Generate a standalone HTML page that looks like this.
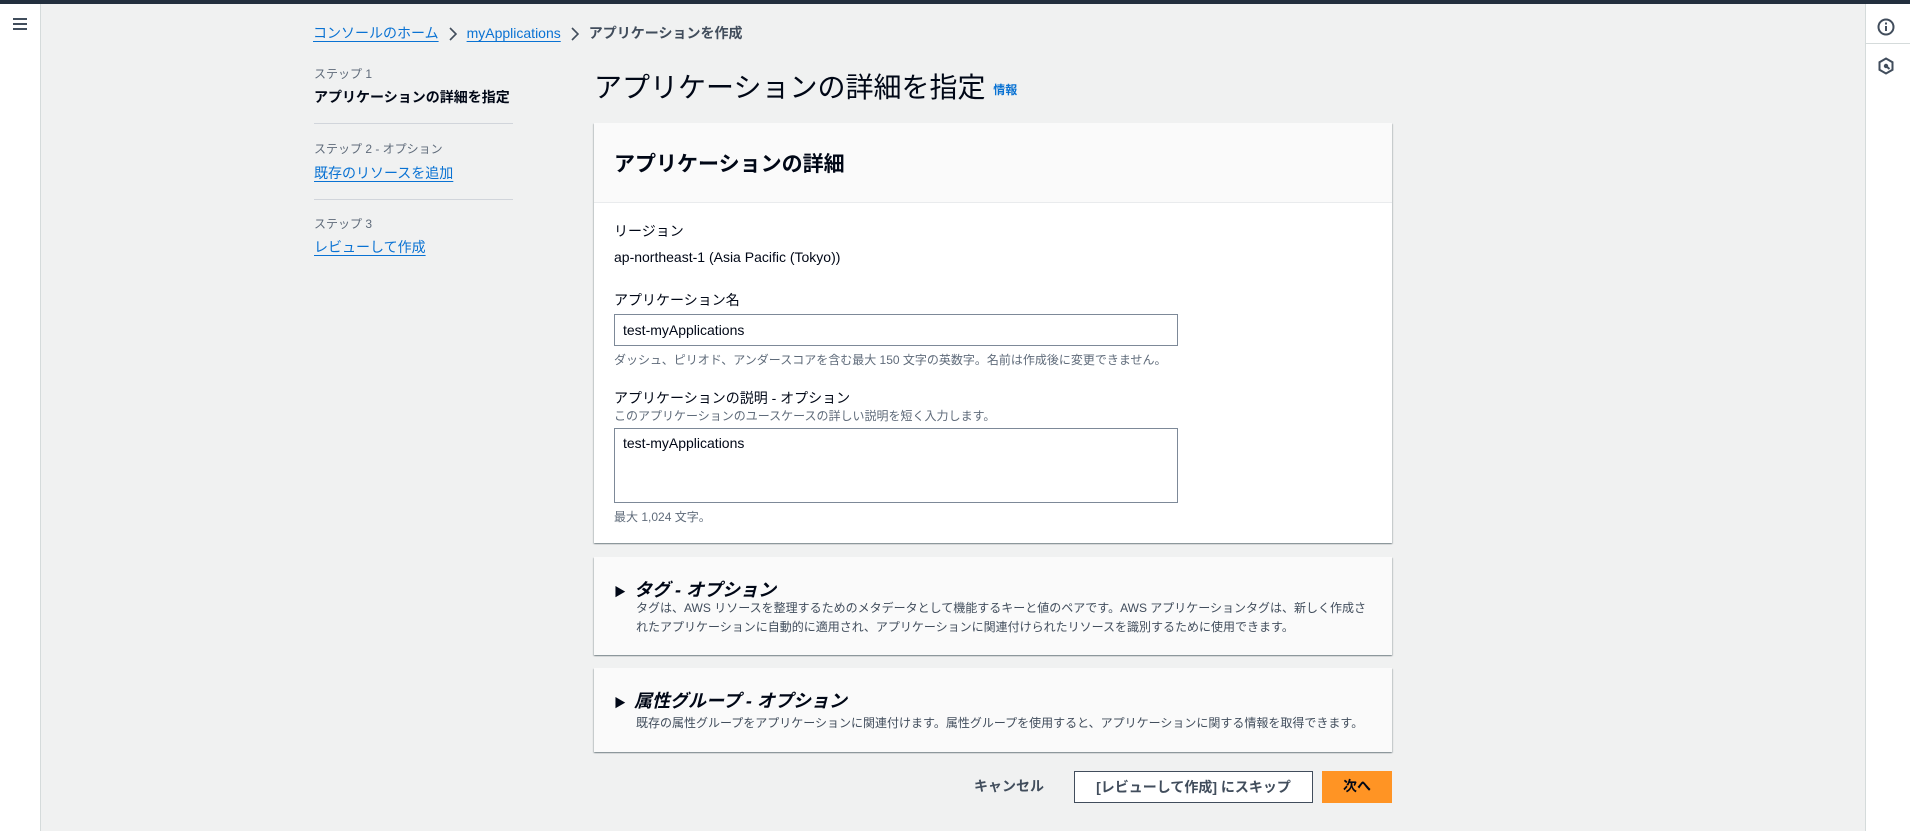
<!DOCTYPE html>
<html><head><meta charset="utf-8"><style>
*{box-sizing:border-box;margin:0;padding:0}
body{width:1910px;height:831px;overflow:hidden;background:#f0f1f1;font-family:"Liberation Sans","Noto Sans CJK JP",sans-serif;color:#000716;font-size:14px;position:relative}
.top{position:absolute;left:0;top:0;width:1910px;height:4px;background:#232f3e}
.lnav{position:absolute;left:0;top:4px;width:41px;height:827px;background:#fff;border-right:1px solid #d5dbdb}
.rnav{position:absolute;left:1865px;top:4px;width:45px;height:827px;background:#fff;border-left:1px solid #d5dbdb}
.abs{position:absolute;white-space:nowrap}
a{color:#0972d3;text-decoration:underline;text-underline-offset:3px}
.crumb{top:23px;left:313px;font-size:14px;color:#414d5c}
.crumb a{color:#0972d3}
.sep{display:inline-block;margin:0 10px;vertical-align:middle}
.sl{font-size:12px;color:#5f6b7a}
.hr{position:absolute;left:314px;width:199px;height:1px;background:#d1d5db}
.card{position:absolute;left:594px;width:798px;background:#fff;box-shadow:0 1px 1px 0 rgba(0,28,36,.3),1px 1px 1px 0 rgba(0,28,36,.15),-1px 1px 1px 0 rgba(0,28,36,.15)}
.inp{position:absolute;left:614px;width:564px;border:1px solid #7d8998;background:#fff;padding:0 8px;font-size:14px}
.small{font-size:12px;color:#5f6b7a}
.btn{position:absolute;top:771px;height:32px;font-weight:bold;font-size:14px;text-align:center;line-height:30px}
</style></head><body>
<div class="top"></div>
<div class="lnav"><div style="position:absolute;left:13px;top:14px;width:14px;height:2px;background:#414d5c;box-shadow:0 5px 0 #414d5c,0 10px 0 #414d5c"></div></div>
<div class="rnav">
<svg style="position:absolute;left:10px;top:13px" width="20" height="20" viewBox="0 0 20 20"><circle cx="10" cy="10" r="7.5" fill="none" stroke="#414d5c" stroke-width="2"/><rect x="9" y="9" width="2" height="5" fill="#414d5c"/><rect x="9" y="5.5" width="2" height="2" fill="#414d5c"/></svg>
<div style="position:absolute;left:0;top:39px;width:45px;height:1px;background:#d5dbdb"></div>
<svg style="position:absolute;left:10px;top:52px" width="20" height="20" viewBox="0 0 20 20"><path d="M10 2.5 16.5 6.2v7.6L10 17.5 3.5 13.8V6.2z" fill="none" stroke="#414d5c" stroke-width="2"/><circle cx="10" cy="10" r="2.2" fill="#414d5c"/><path d="M10 10l3.5 3" stroke="#414d5c" stroke-width="2"/></svg>
</div>
<div class="abs crumb"><a>コンソールのホーム</a><svg class="sep" width="8" height="14" viewBox="0 0 8 14"><path d="M1 1l6 6-6 6" fill="none" stroke="#414d5c" stroke-width="1.6"/></svg><a>myApplications</a><svg class="sep" width="8" height="14" viewBox="0 0 8 14"><path d="M1 1l6 6-6 6" fill="none" stroke="#414d5c" stroke-width="1.6"/></svg><span style="font-weight:bold">アプリケーションを作成</span></div>

<div class="abs sl" style="left:314px;top:65px">ステップ 1</div>
<div class="abs" style="left:314px;top:87px;font-weight:bold">アプリケーションの詳細を指定</div>
<div class="hr" style="top:123px"></div>
<div class="abs sl" style="left:314px;top:140px">ステップ 2 - オプション</div>
<div class="abs" style="left:314px;top:163px"><a>既存のリソースを追加</a></div>
<div class="hr" style="top:199px"></div>
<div class="abs sl" style="left:314px;top:215px">ステップ 3</div>
<div class="abs" style="left:314px;top:237px"><a>レビューして作成</a></div>

<div class="abs" style="left:594px;top:66px;font-size:28px;color:#000716">アプリケーションの詳細を指定 <span style="font-size:12px;font-weight:bold;color:#0972d3;vertical-align:middle">情報</span></div>

<div class="card" style="top:123px;height:420px">
<div style="height:80px;background:#fafafa;border-bottom:1px solid #e9ebed;padding:25px 20px;font-size:21px;font-weight:bold">アプリケーションの詳細</div>
</div>
<div class="abs" style="left:614px;top:221px">リージョン</div>
<div class="abs" style="left:614px;top:249px">ap-northeast-1 (Asia Pacific (Tokyo))</div>
<div class="abs" style="left:614px;top:290px">アプリケーション名</div>
<div class="inp" style="top:314px;height:32px;line-height:30px">test-myApplications</div>
<div class="abs small" style="left:614px;top:351px">ダッシュ、ピリオド、アンダースコアを含む最大 150 文字の英数字。名前は作成後に変更できません。</div>
<div class="abs" style="left:614px;top:388px">アプリケーションの説明 - オプション</div>
<div class="abs small" style="left:614px;top:407px">このアプリケーションのユースケースの詳しい説明を短く入力します。</div>
<div class="inp" style="top:428px;height:75px;padding-top:6px">test-myApplications</div>
<div class="abs small" style="left:614px;top:508px">最大 1,024 文字。</div>

<div class="card" style="top:557px;height:98px;background:#fafafa"></div>
<div class="abs" style="left:614px;top:576px;font-size:18px;font-weight:bold;font-style:italic"><span style="font-style:normal;font-size:12px;margin-right:8px">▶</span>タグ - オプション</div>
<div class="abs small" style="left:636px;top:599px;line-height:19px;color:#414d5c">タグは、AWS リソースを整理するためのメタデータとして機能するキーと値のペアです。AWS アプリケーションタグは、新しく作成さ<br>れたアプリケーションに自動的に適用され、アプリケーションに関連付けられたリソースを識別するために使用できます。</div>

<div class="card" style="top:668px;height:84px;background:#fafafa"></div>
<div class="abs" style="left:614px;top:687px;font-size:18px;font-weight:bold;font-style:italic"><span style="font-style:normal;font-size:12px;margin-right:8px">▶</span>属性グループ - オプション</div>
<div class="abs small" style="left:636px;top:714px;color:#414d5c">既存の属性グループをアプリケーションに関連付けます。属性グループを使用すると、アプリケーションに関する情報を取得できます。</div>

<div class="btn" style="left:960px;width:98px;color:#414d5c">キャンセル</div>
<div class="btn" style="left:1074px;width:239px;background:#fff;border:1px solid #414d5c;color:#414d5c">[レビューして作成] にスキップ</div>
<div class="btn" style="left:1322px;width:70px;background:#ff9424;color:#000716">次へ</div>
</body></html>
